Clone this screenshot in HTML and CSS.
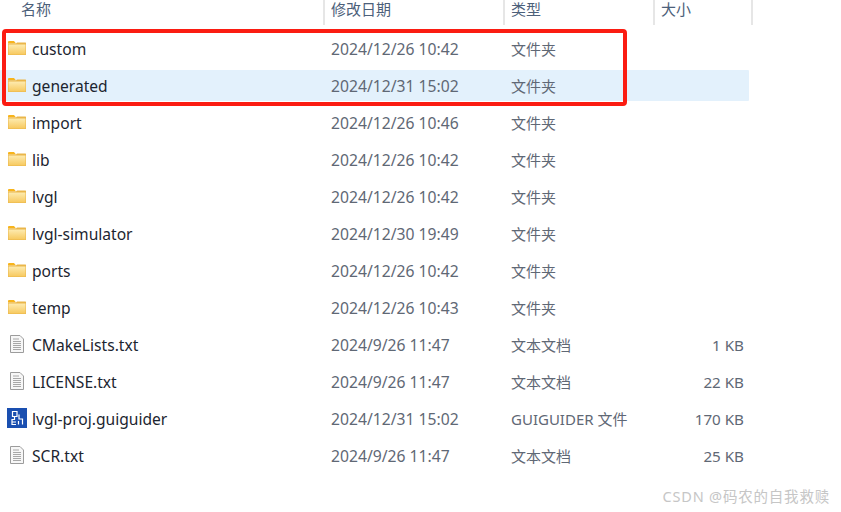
FILE: index.html
```html
<!DOCTYPE html>
<html lang="zh-CN">
<head>
  <meta charset="UTF-8" />
  <title>文件列表</title>
  <link rel="stylesheet" href="styles.css">
</head>
<body>
  <svg class="sprites" width="0" height="0">
    <defs>
      <linearGradient id="folderFill" x1="0" y1="0" x2="0" y2="1">
        <stop offset="0" stop-color="#fdebb0"/>
        <stop offset="1" stop-color="#f7c95f"/>
      </linearGradient>
    </defs>
    <symbol id="folder" viewBox="0 0 18 14">
      <path d="M0 1Q0 0 1 0H6L8 2.500H0Z" fill="#f7b41c"/>
      <path d="M0 2.500H8L9 1.500H17.500Q18 1.500 18 2V13.500Q18 14 17.500 14H.5Q0 14 0 13.500Z" fill="#eab64a"/>
      <path d="M.5 3.500H17.500V13.500H.5Z" fill="url(#folderFill)"/>
    </symbol>
    <symbol id="file" viewBox="0 0 14 18">
      <path d="M.5 .5H10L13.500 4V17.500H.5Z" fill="#f7f7f7" stroke="#9c9c9c"/>
      <path d="M3 4H9M3 6.500H11M3 8.500H11M3 10.500H11M3 12.500H11M3 14.500H11" stroke="#a8a8a8" fill="none"/>
    </symbol>
    <symbol id="guider" viewBox="0 0 20 20">
      <rect width="20" height="20" fill="#1a4fb0"/>
      <path d="M5.500 3.500H10V8.500H5.500ZM7.500 8.500V11.500H5V16.500H9M5 14H9M12 6.500V11H15.500V16.500M11.500 13V16.500" stroke="#fff" stroke-width="1.200" fill="none"/>
    </symbol>
  </svg>

  <div class="explorer">
    <div class="head">
      <div class="head-cell head-name">名称</div>
      <div class="head-cell">修改日期</div>
      <div class="head-cell">类型</div>
      <div class="head-cell">大小</div>
    </div>

    <div class="rows">
      <div class="row">
        <div class="name"><svg class="ico-folder"><use href="#folder"/></svg>custom</div>
        <div class="date">2024/12/26 10:42</div><div class="type">文件夹</div><div class="size"></div>
      </div>
      <div class="row selected">
        <div class="name"><svg class="ico-folder"><use href="#folder"/></svg>generated</div>
        <div class="date">2024/12/31 15:02</div><div class="type">文件夹</div><div class="size"></div>
      </div>
      <div class="row">
        <div class="name"><svg class="ico-folder"><use href="#folder"/></svg>import</div>
        <div class="date">2024/12/26 10:46</div><div class="type">文件夹</div><div class="size"></div>
      </div>
      <div class="row">
        <div class="name"><svg class="ico-folder"><use href="#folder"/></svg>lib</div>
        <div class="date">2024/12/26 10:42</div><div class="type">文件夹</div><div class="size"></div>
      </div>
      <div class="row">
        <div class="name"><svg class="ico-folder"><use href="#folder"/></svg>lvgl</div>
        <div class="date">2024/12/26 10:42</div><div class="type">文件夹</div><div class="size"></div>
      </div>
      <div class="row">
        <div class="name"><svg class="ico-folder"><use href="#folder"/></svg>lvgl-simulator</div>
        <div class="date">2024/12/30 19:49</div><div class="type">文件夹</div><div class="size"></div>
      </div>
      <div class="row">
        <div class="name"><svg class="ico-folder"><use href="#folder"/></svg>ports</div>
        <div class="date">2024/12/26 10:42</div><div class="type">文件夹</div><div class="size"></div>
      </div>
      <div class="row">
        <div class="name"><svg class="ico-folder"><use href="#folder"/></svg>temp</div>
        <div class="date">2024/12/26 10:43</div><div class="type">文件夹</div><div class="size"></div>
      </div>
      <div class="row">
        <div class="name"><svg class="ico-file"><use href="#file"/></svg>CMakeLists.txt</div>
        <div class="date">2024/9/26 11:47</div><div class="type">文本文档</div><div class="size">1 KB</div>
      </div>
      <div class="row">
        <div class="name"><svg class="ico-file"><use href="#file"/></svg>LICENSE.txt</div>
        <div class="date">2024/9/26 11:47</div><div class="type">文本文档</div><div class="size">22 KB</div>
      </div>
      <div class="row">
        <div class="name"><svg class="ico-guider"><use href="#guider"/></svg>lvgl-proj.guiguider</div>
        <div class="date">2024/12/31 15:02</div><div class="type">GUIGUIDER 文件</div><div class="size">170 KB</div>
      </div>
      <div class="row">
        <div class="name"><svg class="ico-file"><use href="#file"/></svg>SCR.txt</div>
        <div class="date">2024/9/26 11:47</div><div class="type">文本文档</div><div class="size">25 KB</div>
      </div>
    </div>

    <!-- red annotation -->
    <div class="highlight-box"></div>
  </div>

  <div class="watermark">CSDN @码农的自我救赎</div>
</body>
</html>
```

FILE: styles.css
```css
* {
  box-sizing: border-box;
}

body {
  margin: 0;
  background-color: #fff;
  font-family: "Noto Sans", "Noto Sans CJK SC", sans-serif;
  overflow: hidden;
}

.sprites {
  position: absolute;
}

.explorer {
  position: relative;
  width: 753px;
  height: 512px;
}

.head {
  display: grid;
  grid-template-columns: 323px 180px 150px 100px;
  height: 25px;
  color: #4c607a;
  font-size: 15px;
  line-height: 18px;
}

.head-cell {
  padding-left: 6px;
  border-left: 2px solid #e6e6e6;
}

.head-name {
  padding-left: 21px;
  border-left: 0;
}

.head-cell:last-child {
  border-right: 2px solid #e6e6e6;
}

.rows {
  display: flex;
  flex-direction: column;
  gap: 6px;
  padding-top: 8px;
}

.row {
  display: grid;
  grid-template-columns: 323px 180px 150px 89px;
  grid-template-rows: 31px;
  width: 749px;
  height: 31px;
  padding-left: 2px;
  line-height: 33px;
  color: #5f6875;
  font-size: 15px;
  border-radius: 1px;
}

.selected {
  background-color: #e3f1fc;
}

.name {
  display: flex;
  align-items: center;
  margin-right: 2px;
  padding-top: 2px;
  line-height: 29px;
  font-size: 15.6px;
  color: #1c2530;
}

.date {
  padding-left: 6px;
  font-size: 15.7px;
}

.type {
  padding-left: 6px;
}

.size {
  font-size: 15.2px;
  text-align: right;
}

.ico-folder {
  width: 18px;
  height: 14px;
  margin: -4px 6px 0 6px;
}

.ico-file {
  width: 14px;
  height: 18px;
  margin: -4px 8px 0 8px;
}

.ico-guider {
  width: 20px;
  height: 20px;
  margin: -4px 5px 0 5px;
}

.highlight-box {
  position: absolute;
  left: 2px;
  top: 29px;
  width: 625px;
  height: 77px;
  border: 4px solid #fb1c12;
  border-radius: 4px;
}

.watermark {
  position: absolute;
  right: 11px;
  bottom: 6px;
  color: #c6c6c6;
  font-size: 14.500px;
  letter-spacing: 0.8px;
}
```
